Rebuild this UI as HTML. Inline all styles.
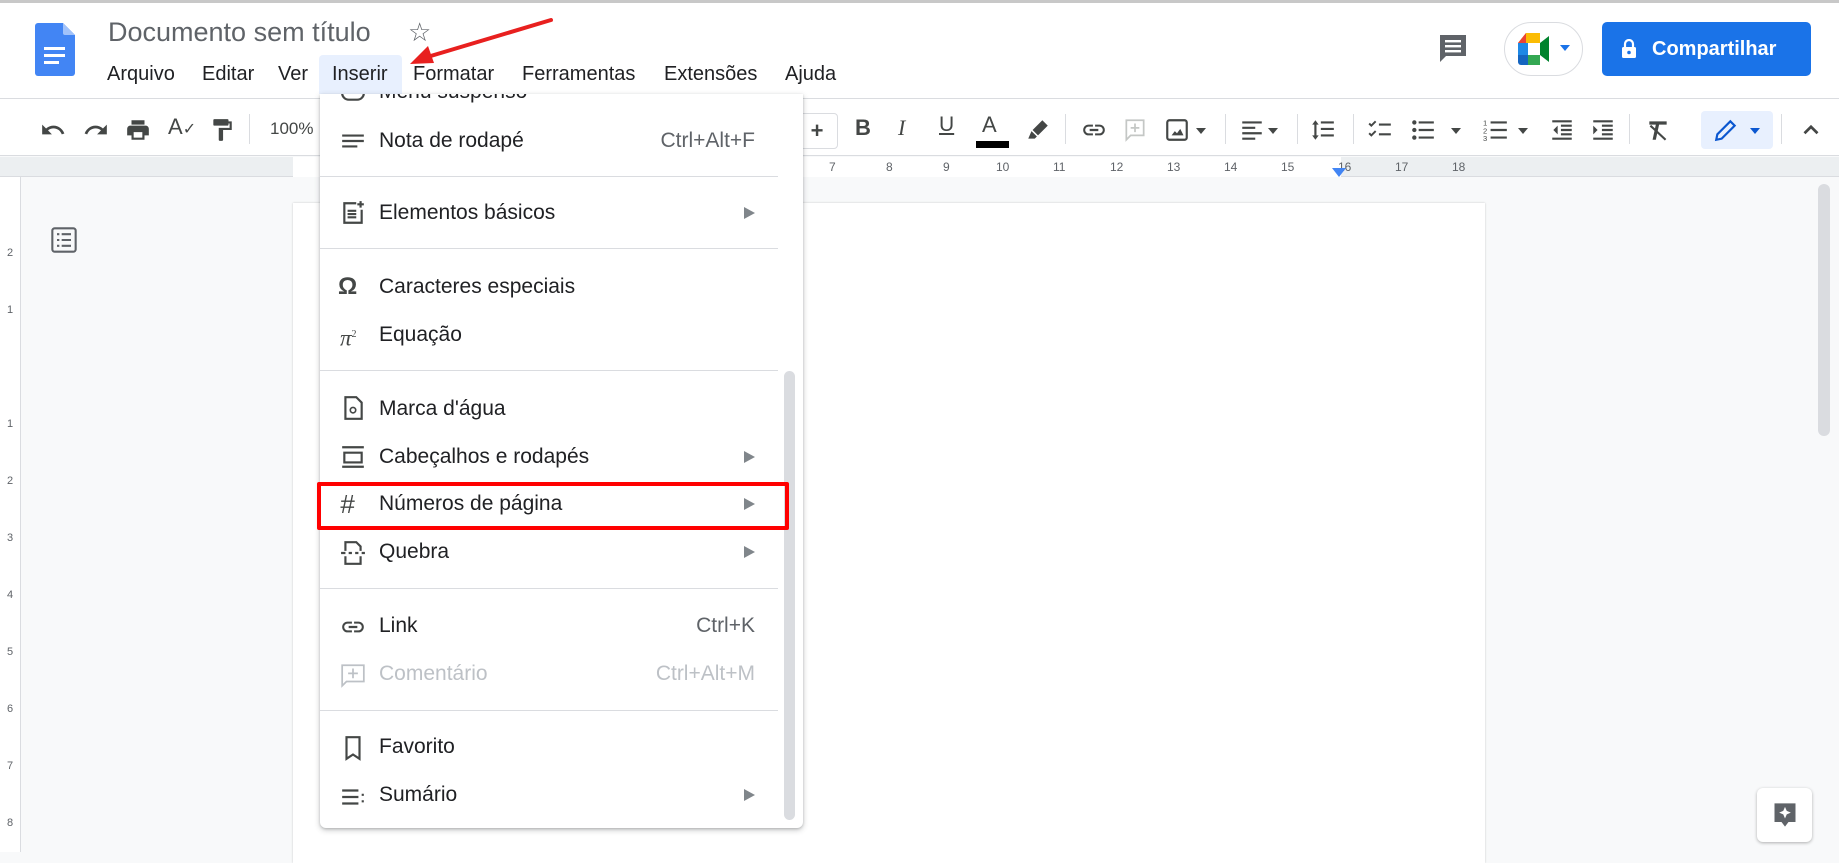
<!DOCTYPE html>
<html><head><meta charset="utf-8"><style>
*{margin:0;padding:0;box-sizing:border-box}
body{width:1839px;height:852px;overflow:hidden;background:#f8f9fa;font-family:"Liberation Sans",Arial,sans-serif;position:relative;color:#202124}
.abs{position:absolute}
#top{left:0;top:0;width:1839px;height:99px;background:#fff;border-top:3px solid #c8c8c8;border-bottom:1px solid #dadce0}
.mi{position:absolute;top:63px;font-size:20px;color:#202124}
#tb{left:0;top:99px;width:1839px;height:57px;background:#fff;border-bottom:1px solid #dadce0}
.ic{position:absolute;top:117px;width:26px;height:26px}
.sep{position:absolute;top:114px;width:1px;height:30px;background:#dadce0}
#ruler{left:0;top:157px;width:1839px;height:20px;background:#eceff1;border-bottom:1px solid #dadce0}
.rn{position:absolute;top:160px;font-size:12px;color:#5f6368}
#page{left:293px;top:203px;width:1192px;height:660px;background:#fff;box-shadow:0 0 2px rgba(0,0,0,.2)}
#menu{left:320px;top:94px;width:483px;height:734px;background:#fff;border-radius:0 0 6px 6px;box-shadow:0 2px 6px rgba(60,64,67,.3),0 1px 2px rgba(60,64,67,.2);overflow:hidden}
.it{position:absolute;left:59px;font-size:21px;color:#202124;line-height:24px}
.sc{position:absolute;right:48px;font-size:21px;color:#5f6368;line-height:24px}
.ar{position:absolute;left:424px;width:0;height:0;border-left:11px solid #80868b;border-top:6px solid transparent;border-bottom:6px solid transparent}
.dv{position:absolute;left:0;width:458px;height:1px;background:#dadce0}
.mic{position:absolute;left:20px;width:26px;height:26px}
</style></head><body>
<div id="top" class="abs"></div>
<svg class="abs" style="left:35px;top:23px" width="40" height="53" viewBox="0 0 40 53"><path d="M3 0h25l12 12v38a3 3 0 0 1-3 3H3a3 3 0 0 1-3-3V3a3 3 0 0 1 3-3z" fill="#4285f4"/><path d="M28 0l12 12H30a2 2 0 0 1-2-2z" fill="#a1c2fa"/><rect x="9" y="24" width="21" height="3" fill="#fff"/><rect x="9" y="31" width="21" height="3" fill="#fff"/><rect x="9" y="38" width="15" height="3" fill="#fff"/></svg>
<div class="abs" style="left:108px;top:17px;font-size:27px;color:#5f6368">Documento sem título</div>
<div class="abs" style="left:408px;top:17px;font-size:26px;color:#5f6368">☆</div>
<div class="abs" style="left:319px;top:55px;width:83px;height:39px;background:#e8f0fe;border-radius:4px 4px 0 0"></div>
<div class="mi" style="left:107px">Arquivo</div>
<div class="mi" style="left:202px">Editar</div>
<div class="mi" style="left:278px">Ver</div>
<div class="mi" style="left:332px">Inserir</div>
<div class="mi" style="left:413px">Formatar</div>
<div class="mi" style="left:522px">Ferramentas</div>
<div class="mi" style="left:664px">Extensões</div>
<div class="mi" style="left:785px">Ajuda</div>
<svg class="abs" style="left:1438px;top:33px" width="30" height="32" viewBox="0 0 30 32"><path d="M2 2h26v21H8l-6 6z" fill="#5f6368"/><rect x="7" y="7" width="16" height="2.4" fill="#fff"/><rect x="7" y="12" width="16" height="2.4" fill="#fff"/><rect x="7" y="17" width="16" height="2.4" fill="#fff"/></svg>
<div class="abs" style="left:1504px;top:22px;width:79px;height:54px;border:1px solid #dadce0;border-radius:27px;background:#fff"></div>
<svg class="abs" style="left:1518px;top:33px" width="38" height="32" viewBox="0 0 38 32"><path d="M8 0h14v10H0z" fill="#fbbc04"/><path d="M0 10h10v12H0z" fill="#1e88e5"/><path d="M0 22h10v10H3a3 3 0 0 1-3-3z" fill="#1565c0"/><path d="M10 22h12v10H10z" fill="#34a853"/><path d="M22 10l9-7v26l-9-7z" fill="#00832d"/><path d="M10 10h12v12H10z" fill="#fff"/><path d="M8 0v10H0z" fill="#ea4335"/></svg>
<div class="abs" style="left:1560px;top:45px;border-top:6px solid #1a73e8;border-left:5px solid transparent;border-right:5px solid transparent"></div>
<div class="abs" style="left:1602px;top:22px;width:209px;height:54px;background:#1a73e8;border-radius:5px;color:#fff;font-size:20px;font-weight:bold;line-height:54px;padding-left:50px">Compartilhar</div>
<svg class="abs" style="left:1622px;top:39px" width="14" height="19" viewBox="0 0 14 19"><rect x="0" y="8" width="14" height="11" rx="1.5" fill="#fff"/><path d="M3 8V5a4 4 0 0 1 8 0v3" stroke="#fff" stroke-width="2.2" fill="none"/><circle cx="7" cy="13.5" r="1.8" fill="#1a73e8"/></svg>

<div id="tb" class="abs"></div>
<svg class="ic" style="left:40px" viewBox="0 0 24 24"><path d="M12.5 8c-2.6 0-5 1-6.9 2.6L2 7v9h9l-3.6-3.6c1.4-1.2 3.2-1.9 5.1-1.9 3.5 0 6.5 2.3 7.6 5.5l2.4-.8C21 11 17.1 8 12.5 8z" fill="#444746"/></svg>
<svg class="ic" style="left:83px" viewBox="0 0 24 24"><path d="M18.4 10.6C16.6 9 14.2 8 11.5 8 6.9 8 3 11 1.5 15.2l2.4.8c1.1-3.2 4.1-5.5 7.6-5.5 2 0 3.7.7 5.1 1.9L13 16h9V7z" fill="#444746"/></svg>
<svg class="ic" style="left:125px" viewBox="0 0 24 24"><path d="M19 8H5c-1.7 0-3 1.3-3 3v6h4v4h12v-4h4v-6c0-1.7-1.3-3-3-3zm-3 11H8v-5h8v5zM18 3H6v4h12z" fill="#444746"/></svg>
<div class="abs" style="left:168px;top:114px;font-size:22px;color:#444746">A<span style="font-size:16px">✓</span></div>
<svg class="ic" style="left:209px" viewBox="0 0 24 24"><path d="M18 4V3c0-.6-.4-1-1-1H5c-.6 0-1 .4-1 1v4c0 .6.4 1 1 1h12c.6 0 1-.4 1-1V6h1v4H9v11c0 .6.4 1 1 1h2c.6 0 1-.4 1-1v-9h8V4h-3z" fill="#444746"/></svg>
<div class="sep" style="left:249px"></div>
<div class="abs" style="left:270px;top:119px;font-size:17px;color:#444746">100%</div>
<div class="abs" style="left:796px;top:113px;width:42px;height:36px;border:1px solid #dadce0;border-radius:4px;font-size:22px;color:#444746;text-align:center;line-height:34px;font-weight:bold">+</div>
<div class="abs" style="left:855px;top:115px;font-size:22px;font-weight:bold;color:#444746">B</div>
<div class="abs" style="left:898px;top:115px;font-size:22px;font-style:italic;font-family:'Liberation Serif';color:#444746">I</div>
<div class="abs" style="left:939px;top:113px;font-size:21px;text-decoration:underline;color:#444746">U</div>
<div class="abs" style="left:982px;top:112px;font-size:22px;color:#444746">A</div>
<div class="abs" style="left:976px;top:141px;width:33px;height:7px;background:#000"></div>
<svg class="ic" style="left:1025px" viewBox="0 0 24 24"><path d="M16 3l5 5-9 9-5-5zM6 13l5 5-2 2H3z" fill="#444746"/></svg>
<div class="sep" style="left:1065px"></div>
<svg class="ic" style="left:1081px" viewBox="0 0 24 24"><path d="M3.9 12c0-1.7 1.4-3.1 3.1-3.1h4V7H7a5 5 0 0 0 0 10h4v-1.9H7c-1.7 0-3.1-1.4-3.1-3.1zM8 13h8v-2H8zm9-6h-4v1.9h4c1.7 0 3.1 1.4 3.1 3.1s-1.4 3.1-3.1 3.1h-4V17h4a5 5 0 0 0 0-10z" fill="#444746"/></svg>
<svg class="ic" style="left:1122px" viewBox="0 0 24 24"><path d="M4 3h16v14H8l-4 4z" fill="none" stroke="#c4c7c5" stroke-width="1.6"/><path d="M12 6v8M8 10h8" stroke="#c4c7c5" stroke-width="1.6"/></svg>
<svg class="ic" style="left:1164px" viewBox="0 0 24 24"><rect x="3" y="3" width="18" height="18" rx="2" fill="none" stroke="#444746" stroke-width="2"/><path d="M7 17l3-4 2 2 3-4 3 6z" fill="#444746"/></svg>
<div class="abs" style="left:1196px;top:128px;border-top:6px solid #444746;border-left:5px solid transparent;border-right:5px solid transparent"></div>
<div class="sep" style="left:1225px"></div>
<svg class="ic" style="left:1239px" viewBox="0 0 24 24"><path d="M3 4h18v2H3zm0 5h12v2H3zm0 5h18v2H3zm0 5h12v2H3z" fill="#444746"/></svg>
<div class="abs" style="left:1268px;top:128px;border-top:6px solid #444746;border-left:5px solid transparent;border-right:5px solid transparent"></div>
<div class="sep" style="left:1297px"></div>
<svg class="ic" style="left:1310px" viewBox="0 0 24 24"><path d="M5 3l-3 4h2v10H2l3 4 3-4H6V7h2zm5 1h12v2H10zm0 6h12v2H10zm0 6h12v2H10z" fill="#444746"/></svg>
<div class="sep" style="left:1353px"></div>
<svg class="ic" style="left:1367px" viewBox="0 0 24 24"><path d="M2 6l2 2 4-4M2 15l2 2 4-4" stroke="#444746" stroke-width="1.8" fill="none"/><path d="M11 6h11v2H11zm0 9h11v2H11z" fill="#444746"/></svg>
<svg class="ic" style="left:1410px" viewBox="0 0 24 24"><circle cx="4" cy="5" r="2" fill="#444746"/><circle cx="4" cy="12" r="2" fill="#444746"/><circle cx="4" cy="19" r="2" fill="#444746"/><path d="M8 4h14v2H8zm0 7h14v2H8zm0 7h14v2H8z" fill="#444746"/></svg>
<div class="abs" style="left:1451px;top:128px;border-top:6px solid #444746;border-left:5px solid transparent;border-right:5px solid transparent"></div>
<svg class="ic" style="left:1483px" viewBox="0 0 24 24"><text x="0" y="8" font-size="7" fill="#444746">1</text><text x="0" y="15" font-size="7" fill="#444746">2</text><text x="0" y="22" font-size="7" fill="#444746">3</text><path d="M7 4h15v2H7zm0 7h15v2H7zm0 7h15v2H7z" fill="#444746"/></svg>
<div class="abs" style="left:1518px;top:128px;border-top:6px solid #444746;border-left:5px solid transparent;border-right:5px solid transparent"></div>
<svg class="ic" style="left:1549px" viewBox="0 0 24 24"><path d="M3 3h18v2H3zm8 4h10v2H11zm0 4h10v2H11zm0 4h10v2H11zM3 19h18v2H3zm5-11v8l-4-4z" fill="#444746"/></svg>
<svg class="ic" style="left:1590px" viewBox="0 0 24 24"><path d="M3 3h18v2H3zm8 4h10v2H11zm0 4h10v2H11zm0 4h10v2H11zM3 19h18v2H3zm0-11v8l4-4z" fill="#444746"/></svg>
<div class="sep" style="left:1629px"></div>
<svg class="ic" style="left:1645px" viewBox="0 0 24 24"><path d="M4 4h16v3H4zM10 7h3l-3 14H7z" fill="#444746"/><path d="M5 8l14 13" stroke="#444746" stroke-width="2"/></svg>
<div class="abs" style="left:1701px;top:111px;width:72px;height:38px;background:#e8f0fe;border-radius:4px"></div>
<svg class="ic" style="left:1713px" viewBox="0 0 24 24"><path d="M3 21l1-5L16 4l4 4L8 20z" fill="none" stroke="#0b57d0" stroke-width="2"/></svg>
<div class="abs" style="left:1750px;top:128px;border-top:6px solid #0b57d0;border-left:5px solid transparent;border-right:5px solid transparent"></div>
<div class="sep" style="left:1781px"></div>
<svg class="ic" style="left:1798px" viewBox="0 0 24 24"><path d="M6 15l6-6 6 6" stroke="#444746" stroke-width="2.5" fill="none"/></svg>

<div id="ruler" class="abs"></div>
<div class="abs" style="left:293px;top:157px;width:1048px;height:20px;background:#fff"></div>
<div class="rn" style="left:829px">7</div><div class="rn" style="left:886px">8</div><div class="rn" style="left:943px">9</div><div class="rn" style="left:996px">10</div><div class="rn" style="left:1053px">11</div><div class="rn" style="left:1110px">12</div><div class="rn" style="left:1167px">13</div><div class="rn" style="left:1224px">14</div><div class="rn" style="left:1281px">15</div><div class="rn" style="left:1338px">16</div><div class="rn" style="left:1395px">17</div><div class="rn" style="left:1452px">18</div>
<div class="abs" style="left:1332px;top:168px;border-top:9px solid #4285f4;border-left:7px solid transparent;border-right:7px solid transparent"></div>
<div class="abs" style="left:0;top:177px;width:21px;height:675px;background:#fff;border-right:1px solid #dadce0"></div>
<div class="abs" style="left:4px;top:225px;font-size:11px;color:#5f6368;line-height:57px;width:12px;text-align:center">2<br>1<br><br>1<br>2<br>3<br>4<br>5<br>6<br>7<br>8</div>

<svg class="abs" style="left:50px;top:226px" width="28" height="28" viewBox="0 0 24 24"><rect x="2" y="2" width="20" height="20" rx="2" fill="none" stroke="#5f6368" stroke-width="1.8"/><path d="M6 7h2M10 7h8M6 12h2M10 12h8M6 17h2M10 17h8" stroke="#5f6368" stroke-width="1.8"/></svg>
<div id="page" class="abs"></div>
<div class="abs" style="left:1818px;top:184px;width:12px;height:252px;background:#dadce0;border-radius:6px"></div>
<div class="abs" style="left:1757px;top:788px;width:55px;height:54px;background:#fff;border-radius:6px;box-shadow:0 1px 3px rgba(0,0,0,.3)"></div>
<svg class="abs" style="left:1771px;top:801px" width="28" height="28" viewBox="0 0 24 24"><path d="M3 2h18v16h-6l-3 4-3-4H3z" fill="#5f6368"/><path d="M12 5l1.5 3.5L17 10l-3.5 1.5L12 15l-1.5-3.5L7 10l3.5-1.5z" fill="#fff"/></svg>

<div id="menu" class="abs">
 <div class="it" style="top:-14px">Menu suspenso</div>
 <svg class="mic" style="top:-16px" viewBox="0 0 24 24"><rect x="2" y="4" width="20" height="16" rx="6" fill="none" stroke="#444746" stroke-width="2"/></svg>
 <svg class="mic" style="top:34px" viewBox="0 0 24 24"><path d="M2 6h20v2H2zm0 5h20v2H2zm0 5h14v2H2z" fill="#444746"/></svg>
 <div class="it" style="top:35px">Nota de rodapé</div><div class="sc" style="top:35px">Ctrl+Alt+F</div>
 <div class="dv" style="top:82px"></div>
 <svg class="mic" style="top:106px" viewBox="0 0 24 24"><path d="M15 3H4v18h16V9" fill="none" stroke="#444746" stroke-width="2"/><path d="M7 10h8M7 13h8M7 16h8M19 1v6M16 4h6" stroke="#444746" stroke-width="2"/></svg>
 <div class="it" style="top:107px">Elementos básicos</div><div class="ar" style="top:113px"></div>
 <div class="dv" style="top:154px"></div>
 <div class="it" style="top:181px;left:18px;font-size:24px;font-weight:bold;color:#444746">Ω</div>
 <div class="it" style="top:181px">Caracteres especiais</div>
 <div class="it" style="top:229px;left:20px;font-size:23px;font-style:italic;color:#444746;font-family:'Liberation Serif'">π<sup style="font-size:10px;font-style:normal">2</sup></div>
 <div class="it" style="top:229px">Equação</div>
 <div class="dv" style="top:276px"></div>
 <svg class="mic" style="top:301px" viewBox="0 0 24 24"><path d="M5 2h10l5 5v15H5z" fill="none" stroke="#444746" stroke-width="2"/><circle cx="12" cy="14" r="2.5" fill="none" stroke="#444746" stroke-width="1.5"/></svg>
 <div class="it" style="top:303px">Marca d'água</div>
 <svg class="mic" style="top:350px" viewBox="0 0 24 24"><path d="M2 2h20v2H2zM2 20h20v2H2zM3 7h18v11H3z" fill="#444746"/><rect x="5" y="9" width="14" height="7" fill="#fff"/></svg>
 <div class="it" style="top:351px">Cabeçalhos e rodapés</div><div class="ar" style="top:357px"></div>
 <div class="it" style="top:398px;left:20px;font-size:26px;font-style:italic;color:#444746">#</div>
 <div class="it" style="top:398px">Números de página</div><div class="ar" style="top:404px"></div>
 <svg class="mic" style="top:446px" viewBox="0 0 24 24"><path d="M5 10V2h10l4 4v4M5 15v7h14v-7" fill="none" stroke="#444746" stroke-width="2"/><path d="M1 12h4M8 12h3M14 12h3M20 12h3" stroke="#444746" stroke-width="2"/></svg>
 <div class="it" style="top:446px">Quebra</div><div class="ar" style="top:452px"></div>
 <div class="dv" style="top:494px"></div>
 <svg class="mic" style="top:520px" viewBox="0 0 24 24"><path d="M3.9 12c0-1.7 1.4-3.1 3.1-3.1h4V7H7a5 5 0 0 0 0 10h4v-1.9H7c-1.7 0-3.1-1.4-3.1-3.1zM8 13h8v-2H8zm9-6h-4v1.9h4c1.7 0 3.1 1.4 3.1 3.1s-1.4 3.1-3.1 3.1h-4V17h4a5 5 0 0 0 0-10z" fill="#444746"/></svg>
 <div class="it" style="top:520px">Link</div><div class="sc" style="top:520px">Ctrl+K</div>
 <svg class="mic" style="top:568px" viewBox="0 0 24 24"><path d="M2 3h20v15H6l-4 4z" fill="none" stroke="#bdc1c6" stroke-width="1.6"/><path d="M12 6v9M7.5 10.5h9" stroke="#bdc1c6" stroke-width="1.6"/></svg>
 <div class="it" style="top:568px;color:#bdc1c6">Comentário</div><div class="sc" style="top:568px;color:#bdc1c6">Ctrl+Alt+M</div>
 <div class="dv" style="top:616px"></div>
 <svg class="mic" style="top:641px" viewBox="0 0 24 24"><path d="M6 2h12v20l-6-4-6 4z" fill="none" stroke="#444746" stroke-width="2"/></svg>
 <div class="it" style="top:641px">Favorito</div>
 <svg class="mic" style="top:690px" viewBox="0 0 24 24"><path d="M2 5h15v2H2zm0 6h15v2H2zm0 6h15v2H2zM20 9h2v2h-2zm0 6h2v2h-2z" fill="#444746"/></svg>
 <div class="it" style="top:689px">Sumário</div><div class="ar" style="top:695px"></div>
 <div class="abs" style="left:464px;top:277px;width:11px;height:449px;background:#dadce0;border-radius:6px"></div>
</div>
<div class="abs" style="left:317px;top:482px;width:472px;height:48px;border:4px solid #f00;border-radius:2px"></div>
<svg class="abs" style="left:400px;top:15px" width="160" height="60" viewBox="0 0 160 60"><path d="M151 5L24 43" stroke="#e8201f" stroke-width="4" stroke-linecap="round"/><path d="M10 49l18-18 6 17z" fill="#e8201f"/></svg>
</body></html>
